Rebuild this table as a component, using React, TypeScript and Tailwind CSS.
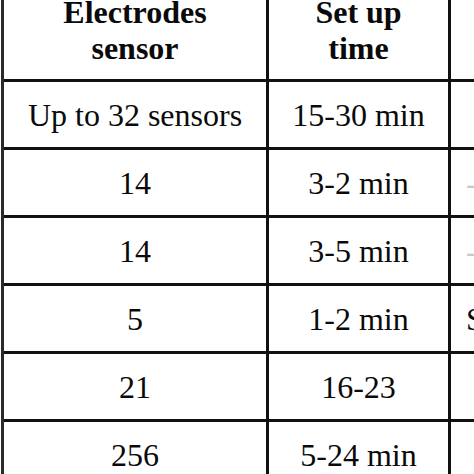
import React from "react";

const rows: { a: string; b: string; c: string; cFaint?: boolean }[] = [
  { a: "Up to 32 sensors", b: "15-30 min", c: "" },
  { a: "14", b: "3-2 min", c: "-", cFaint: true },
  { a: "14", b: "3-5 min", c: "-", cFaint: true },
  { a: "5", b: "1-2 min", c: "Semi-dry" },
  { a: "21", b: "16-23", c: "" },
  { a: "256", b: "5-24 min", c: "" },
];

export default function App() {
  return (
    <div
      className="w-[474px] h-[474px] overflow-hidden bg-white text-[#0a0a0a]"
      style={{ fontFamily: '"Liberation Serif", "Times New Roman", serif' }}
    >
      <div className="mt-[-19px] ml-[1px] w-[520px] border-l-[3px] border-[#2a2a2a]">
        {/* header */}
        <div className="flex h-[101px] border-b-[3px] border-[#111]">
          <div className="w-[265px] shrink-0 border-r-[3px] border-[#111] flex flex-col items-center justify-center pb-[1px] text-[32px] leading-[36px] font-bold">
            <span>Electrodes</span>
            <span>sensor</span>
          </div>
          <div className="w-[182px] shrink-0 border-r-[3px] border-[#111] flex flex-col items-center justify-center pb-[1px] text-[32px] leading-[36px] font-bold">
            <span>Set up</span>
            <span>time</span>
          </div>
          <div className="flex-1" />
        </div>
        {rows.map((r, i) => (
          <div key={i} className="flex h-[68px] border-b-[3px] border-[#111]">
            <div className="w-[265px] shrink-0 border-r-[3px] border-[#111] flex items-center justify-center text-[32px] leading-[36px]">
              {r.a}
            </div>
            <div className="w-[182px] shrink-0 border-r-[3px] border-[#111] flex items-center justify-center text-[32px] leading-[36px]">
              {r.b}
            </div>
            <div
              className={
                "flex-1 flex items-center pl-[15px] text-[32px] leading-[36px] whitespace-nowrap " +
                (r.cFaint ? "text-[#c8c8c8]" : "")
              }
            >
              {r.c}
            </div>
          </div>
        ))}
      </div>
    </div>
  );
}
